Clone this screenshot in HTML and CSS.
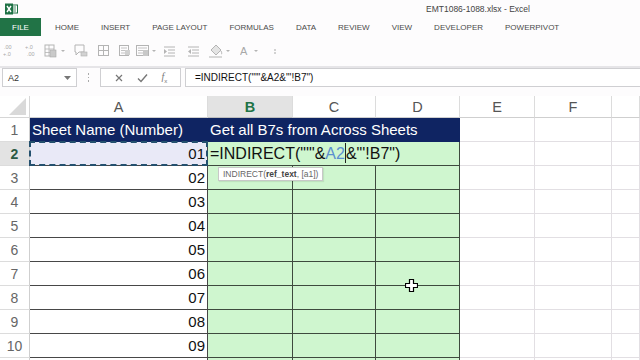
FILE: index.html
```html
<!DOCTYPE html>
<html>
<head>
<meta charset="utf-8">
<link rel="stylesheet" href="styles.css">
</head>
<body>
<div class="titlebar">
  <svg class="xl-icon" viewBox="0 0 13 12"><rect x="6" y="2" width="6.5" height="8" fill="#fff" stroke="#1e7145" stroke-width="1"/><path d="M8 4h3M8 6h3M8 8h3" stroke="#1e7145" stroke-width="0.8"/><rect x="0" y="0.5" width="8" height="11" fill="#1e7145"/><path d="M2 3l4 6M6 3l-4 6" stroke="#fff" stroke-width="1.4"/></svg>
  <span class="title">EMT1086-1088.xlsx - Excel</span>
</div>
<div class="tabs">
  <div class="file">FILE</div>
  <div class="tab-list">
    <span>HOME</span><span>INSERT</span><span>PAGE LAYOUT</span><span>FORMULAS</span><span>DATA</span><span>REVIEW</span><span>VIEW</span><span>DEVELOPER</span><span>POWERPIVOT</span>
  </div>
</div>
<div class="ribbon">
  <svg width="22" height="16" viewBox="0 0 22 16"><text x="1" y="6" class="itx">.00</text><text x="0" y="13" class="itx">+.0</text></svg>
  <svg width="19" height="16" viewBox="0 0 19 16"><text x="0" y="6" class="itx">+.0</text><text x="2" y="13" class="itx">.00</text></svg>
  <svg width="29" height="16" viewBox="0 0 29 16"><rect x="1" y="2" width="9" height="11" fill="none" stroke="#b4b4b4"/><path d="M1 6h9M1 9.5h9M5 2v11" stroke="#b4b4b4" stroke-width="0.8"/><rect x="6" y="7" width="6" height="7" fill="#c9c9c9" stroke="#a9a9a9" stroke-width="0.6"/><path d="M17 7l2 2 2-2z" fill="#b4b4b4"/></svg>
  <svg width="24" height="16" viewBox="0 0 24 16"><path d="M2 2h9v7h-5l-3 3v-3h-1z" fill="none" stroke="#b4b4b4"/><rect x="8" y="9" width="6" height="4" fill="#d2d2d2" stroke="#b0b0b0" stroke-width="0.6"/></svg>
  <svg width="21" height="16" viewBox="0 0 21 16"><rect x="1.5" y="2.5" width="10" height="10" fill="none" stroke="#b4b4b4"/><path d="M6.5 2.5v10M1.5 7.5h10" stroke="#b4b4b4"/></svg>
  <svg width="17" height="16" viewBox="0 0 17 16"><rect x="1.5" y="2.5" width="9" height="10" fill="none" stroke="#b4b4b4"/><path d="M3 5h6M3 7.5h6M3 10h4" stroke="#b4b4b4" stroke-width="0.8"/><rect x="7" y="7" width="5" height="5" fill="#d0d0d0"/></svg>
  <svg width="28" height="16" viewBox="0 0 28 16"><rect x="1.5" y="2.5" width="12" height="10" fill="none" stroke="#b4b4b4"/><path d="M3 5h9M3 7.5h9M3 10h5" stroke="#b4b4b4" stroke-width="0.8"/><rect x="8" y="7" width="5" height="6" fill="#c8c8c8"/><path d="M17 7l2 2 2-2z" fill="#b4b4b4"/></svg>
  <svg width="24" height="16" viewBox="0 0 24 16"><path d="M1 4h11M5 7h7M5 10h7M1 13h11" stroke="#b4b4b4"/><path d="M1 6l3 2.5-3 2.5z" fill="#b4b4b4"/></svg>
  <svg width="21" height="16" viewBox="0 0 21 16"><path d="M1 4h11M5 7h7M5 10h7M1 13h11" stroke="#b4b4b4"/><path d="M4 6l-3 2.5 3 2.5z" fill="#b4b4b4"/></svg>
  <svg width="32" height="16" viewBox="0 0 32 16"><path d="M3 7l5-5 5 5-5 5z" fill="#e4e4e4" stroke="#b4b4b4"/><path d="M13 8c1 2 1 3 0 3" stroke="#b4b4b4" fill="none"/><rect x="1" y="13" width="13" height="2" fill="#d8d8d8"/><path d="M18 7l2 2 2-2z" fill="#b4b4b4"/></svg>
  <svg width="32" height="16" viewBox="0 0 32 16"><text x="0" y="12" class="ita">A</text><path d="M14 7l2 2 2-2z" fill="#b4b4b4"/></svg>
  <svg width="8" height="16" viewBox="0 0 8 16"><path d="M2 7h2M2 10h2" stroke="#a8a8a8" stroke-width="1.2"/></svg>
</div>
<div class="fbar">
  <div class="namebox"><span>A2</span><svg width="7" height="4" viewBox="0 0 7 4"><path d="M0 0h7L3.5 4z" fill="#777"/></svg></div>
  <div class="grip"><i></i><i></i><i></i></div>
  <div class="fxbox">
    <svg width="10" height="10" viewBox="0 0 10 10"><path d="M2 2l6 6M8 2l-6 6" stroke="#777" stroke-width="1.2"/></svg>
    <svg width="11" height="10" viewBox="0 0 11 10"><path d="M1 5.5l3 3L10 1.5" stroke="#777" stroke-width="1.4" fill="none"/></svg>
    <span class="fx"><i>f</i><sub>x</sub></span>
  </div>
  <div class="finput">=INDIRECT("'"&amp;A2&amp;"'!B7")</div>
</div>
<div class="sheet">
  <div class="corner"><span class="tri"></span></div>
  <div class="ch">A</div><div class="ch sel">B</div><div class="ch">C</div><div class="ch">D</div><div class="ch">E</div><div class="ch">F</div><div class="ch"></div>

  <div class="rh">1</div><div class="c hd">Sheet Name (Number)</div><div class="c hd span3">Get all B7s from Across Sheets</div><div class="c"></div><div class="c"></div><div class="c"></div>

  <div class="rh sel">2</div><div class="c num a2">01</div><div class="c g edit span3"><span class="etext">=INDIRECT("'"&amp;<span class="ref">A2</span><span class="caret"></span>&amp;"'!B7")</span><div class="tip">INDIRECT(<b>ref_text</b>, [a1])</div></div><div class="c"></div><div class="c"></div><div class="c"></div>

  <div class="rh">3</div><div class="c num t">02</div><div class="c g"></div><div class="c g"></div><div class="c g"></div><div class="c"></div><div class="c"></div><div class="c"></div>
  <div class="rh">4</div><div class="c num t">03</div><div class="c g"></div><div class="c g"></div><div class="c g"></div><div class="c"></div><div class="c"></div><div class="c"></div>
  <div class="rh">5</div><div class="c num t">04</div><div class="c g"></div><div class="c g"></div><div class="c g"></div><div class="c"></div><div class="c"></div><div class="c"></div>
  <div class="rh">6</div><div class="c num t">05</div><div class="c g"></div><div class="c g"></div><div class="c g"></div><div class="c"></div><div class="c"></div><div class="c"></div>
  <div class="rh">7</div><div class="c num t">06</div><div class="c g"></div><div class="c g"></div><div class="c g"></div><div class="c"></div><div class="c"></div><div class="c"></div>
  <div class="rh">8</div><div class="c num t">07</div><div class="c g"></div><div class="c g"></div><div class="c g"></div><div class="c"></div><div class="c"></div><div class="c"></div>
  <div class="rh">9</div><div class="c num t">08</div><div class="c g"></div><div class="c g"></div><div class="c g"></div><div class="c"></div><div class="c"></div><div class="c"></div>
  <div class="rh">10</div><div class="c num t">09</div><div class="c g"></div><div class="c g"></div><div class="c g"></div><div class="c"></div><div class="c"></div><div class="c"></div>
  <div class="rh"></div><div class="c num t"></div><div class="c g"></div><div class="c g"></div><div class="c g"></div><div class="c"></div><div class="c"></div><div class="c"></div>
</div>
<svg class="mouse" width="13" height="13" viewBox="0 0 13 13"><path d="M4.5 0.5h4v4h4v4h-4v4h-4v-4h-4v-4h4z" fill="#fff" stroke="#000" stroke-width="1.2"/></svg>
</body>
</html>
```
FILE: styles.css
```css
* { box-sizing: border-box; margin: 0; padding: 0; }
html, body { width: 640px; height: 360px; overflow: hidden; background: #fdfcfd; }
body { font-family: "Liberation Sans", Arial, sans-serif; color: #444; position: relative; }

.titlebar { height: 17px; display: flex; align-items: center; }
.xl-icon { margin-left: 5px; width: 13px; height: 12px; }
.title { margin-left: 408px; font-size: 8.5px; color: #444; }

.tabs { height: 18px; margin-top: 1px; display: flex; align-items: center; }
.file { width: 41px; height: 18px; background: #217346; color: #fff; font-size: 8px; display: flex; align-items: center; justify-content: center; }
.tab-list { display: flex; gap: 22px; margin-left: 14px; font-size: 8px; color: #4a4a4a; }

.ribbon { height: 30px; display: flex; align-items: center; padding-left: 3px; }
.ribbon svg { display: block; }
.itx { font-size: 5.5px; fill: #a8a8a8; font-family: "Liberation Sans", sans-serif; }
.ita { font-size: 11px; fill: #a8a8a8; font-family: "Liberation Sans", sans-serif; }

.fbar { height: 22px; border-top: 2px solid #e6e5e8; display: flex; align-items: stretch; padding-bottom: 1px; }
.namebox { margin-left: 2px; width: 75px; border: 1px solid #cfcfd2; background: #fff; display: flex; align-items: center; justify-content: space-between; padding: 0 5px 0 5px; font-size: 9px; color: #333; }
.grip { width: 23px; display: flex; flex-direction: column; align-items: center; justify-content: center; gap: 2px; }
.grip i { display: block; width: 1px; height: 1.5px; background: #aaa; }
.fxbox { width: 81px; border: 1px solid #cfcfd2; background: #fff; display: flex; align-items: center; justify-content: space-around; padding: 0 6px 0 6px; }
.fx { font-family: "Liberation Serif", serif; font-size: 10px; color: #777; }
.fx sub { font-size: 6px; font-family: "Liberation Sans", sans-serif; }
.finput { margin-left: 4px; flex: 1; border: 1px solid #cfcfd2; border-right: 0; background: #fff; font-size: 10px; color: #111; display: flex; align-items: center; padding-left: 9px; }

.sheet { margin-top: 8px; display: grid; grid-template-columns: 30px 178px 85px 83px 84px 75px 77px 28px; grid-template-rows: 22px; grid-auto-rows: 24px; }
.corner { background: #fff; border-right: 1px solid #d6d6d6; border-bottom: 1px solid #d6d6d6; display: flex; align-items: flex-end; justify-content: flex-end; padding: 0 3px 2px 0; }
.tri { width: 0; height: 0; border-left: 17px solid transparent; border-bottom: 17px solid #d9d9d9; }
.ch { background: #fff; border-right: 1px solid #dcdcdc; border-bottom: 1px solid #cfcfcf; font-size: 14.5px; color: #555; display: flex; align-items: center; justify-content: center; }
.ch.sel { background: #e3e3e3; color: #217346; font-weight: bold; border-bottom: 1px solid #bdbdbd; }
.rh { background: #fff; border-right: 1px solid #cfcfcf; border-bottom: 1px solid #dcdcdc; font-size: 14px; color: #666; display: flex; align-items: center; justify-content: center; }
.rh.sel { background: #e3e3e3; color: #2b5a44; font-weight: bold; }

.c { border-right: 1px solid #e2dfe3; border-bottom: 1px solid #e2dfe3; font-size: 15px; color: #111; line-height: 23px; white-space: nowrap; background: #fff; }
.span3 { grid-column: span 3; }
.hd { background: #0f2462; color: #fff; border-color: #0f2462; padding-left: 2px; }
.num { text-align: right; padding-right: 2px; }
.t { border-bottom-color: #474747; border-right-color: #474747; }
.g { background: #cff6cf; border-right-color: #3e4a3e; border-bottom-color: #3e4a3e; }

.a2 { background: #e9e9f7; position: relative; border-bottom-color: #474747; border-right-color: #474747; }
.a2::after { content: ""; position: absolute; inset: -1px -1px -1px -1px; border: 2px dashed #24506e; }

.edit { position: relative; padding-left: 2px; z-index: 2; }
.etext { font-size: 16px; color: #111; }
.ref { color: #5b8fd0; }
.caret { display: inline-block; width: 1px; height: 20px; background: #222; vertical-align: -4px; }
.tip { position: absolute; left: 10px; top: 25px; height: 14px; padding: 0 4px; background: #fff; border: 1px solid #c8c8c8; font-size: 8.5px; line-height: 12px; color: #666; box-shadow: 1px 1px 1px rgba(0,0,0,0.08); }
.tip b { color: #444; }

.mouse { position: absolute; left: 405px; top: 279px; }
```
